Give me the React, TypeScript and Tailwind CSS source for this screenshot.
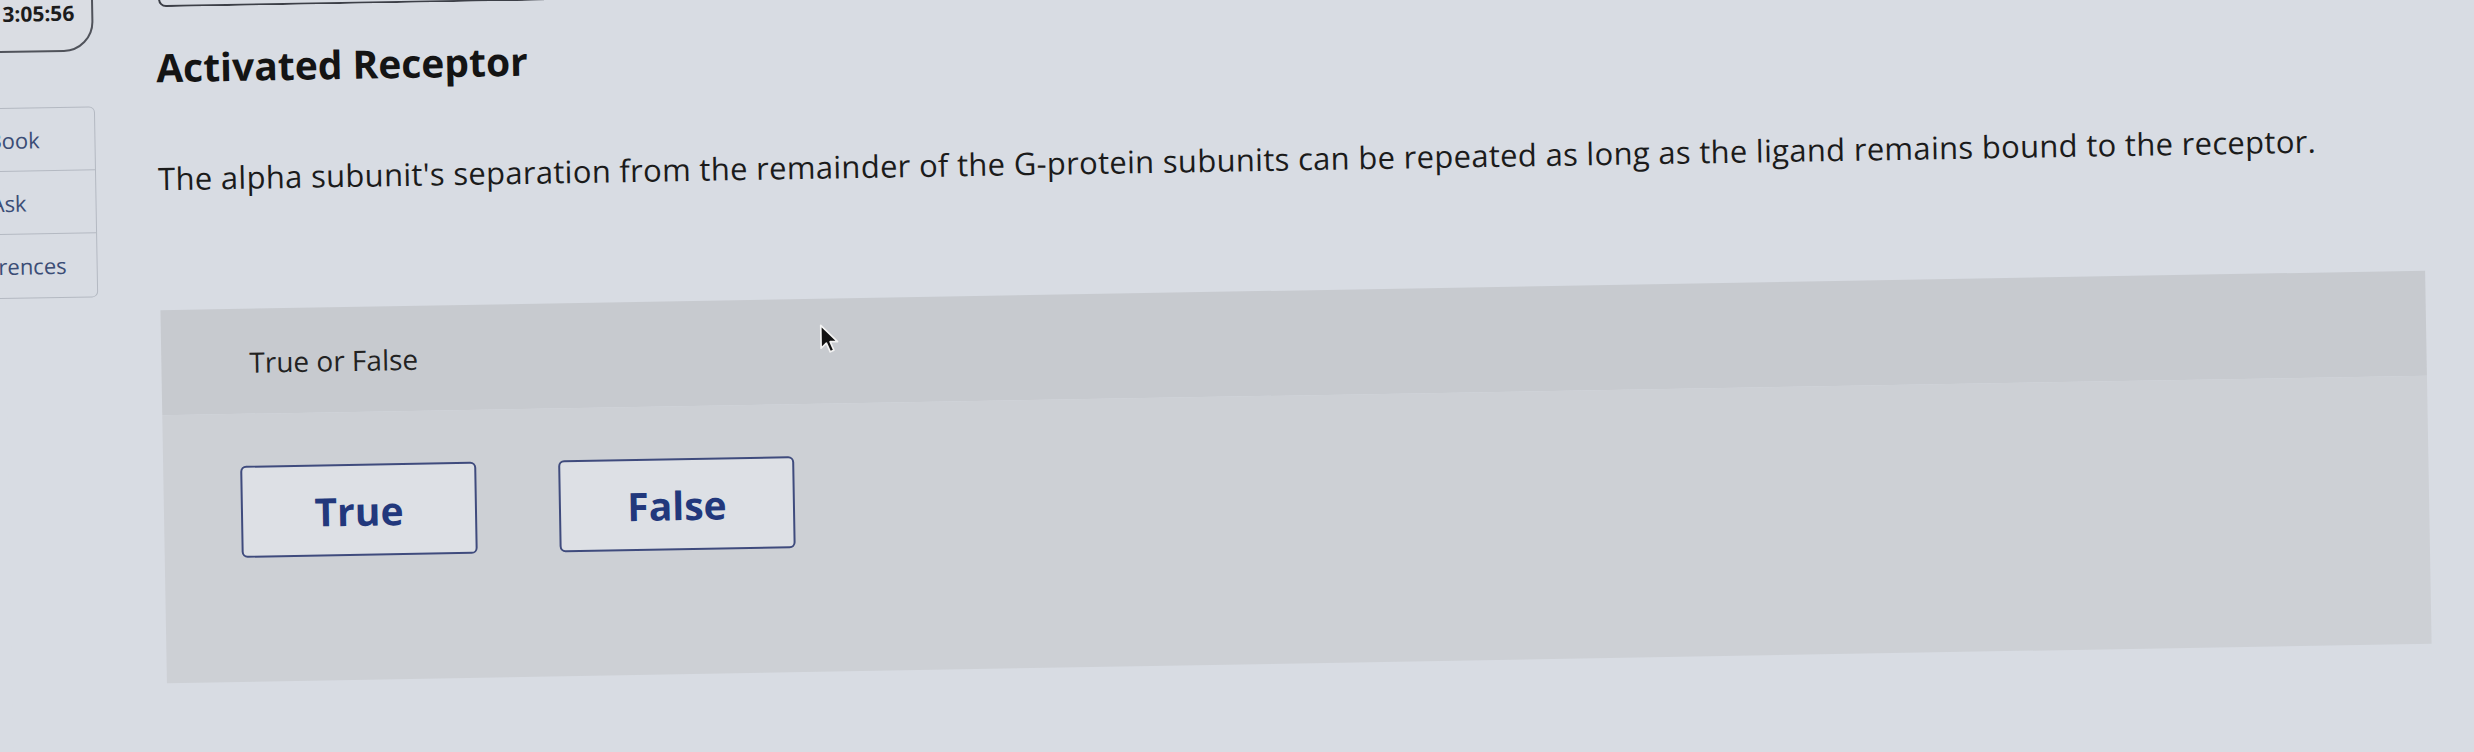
import React from "react";

function Cursor() {
  return (
    <svg
      className="absolute left-[658px] top-[25px]"
      width="22"
      height="32"
      viewBox="0 0 20 30"
    >
      <path
        d="M1.5 1.5 L1.5 23 L6.5 18.2 L10 26.5 L13.4 25 L10 17 L17 17 Z"
        fill="#111"
        stroke="#f2f2f2"
        strokeWidth="1.6"
        strokeLinejoin="round"
      />
    </svg>
  );
}

function AnswerButton({ label }: { label: string }) {
  return (
    <button className="w-[236px] h-[92px] rounded-[6px] border-2 border-[#3f4b7d] bg-[#dde0e5] flex items-center justify-center text-[39px] font-bold text-[#22387c] leading-none">
      {label}
    </button>
  );
}

export default function App() {
  const tabs = ["eBook", "Ask", "References"];
  return (
    <div className="w-[2474px] h-[752px] overflow-hidden bg-[#d8dce3] font-['Open_Sans',_'Lato',_sans-serif]">
      <div className="w-[2620px] h-[900px] origin-top-left -rotate-1 flex bg-[#d8dce3]">
        {/* left rail: timer and tool tabs */}
        <div className="w-[93px] shrink-0 flex flex-col">
          <div className="w-[133px] h-[73px] -ml-[40px] -mt-[20px] border-2 border-[#50535b] rounded-br-[30px] pl-[40px] pt-[22px] bg-[#dadde3]">
            <span className="text-[21px] font-bold leading-none text-[#1c1c1c]">
              3:05:56
            </span>
          </div>
          <div className="w-[176px] -ml-[83px] mt-[55px] border border-[#b4b9c2] rounded-r-[6px] flex flex-col">
            {tabs.map((t, i) => (
              <div
                key={t}
                className={`h-[63px] flex items-center justify-center text-[22px] text-[#3b4d76] ${
                  i < tabs.length - 1 ? "border-b border-[#b4b9c2]" : ""
                }`}
              >
                {t}
              </div>
            ))}
          </div>
        </div>

        {/* question area */}
        <div className="ml-[62px] w-[2265px] shrink-0 flex flex-col">
          <div className="w-[900px] h-[30px] -mt-[20px] ml-[3px] border-l-2 border-b-2 border-[#3c3f47] rounded-bl-[8px]" />
          <h1 className="mt-[35px] text-[39px] leading-[50px] font-bold text-[#141414]">
            Activated Receptor
          </h1>
          <p className="mt-[68px] text-[31px] leading-[37px] tracking-[0.3px] text-[#1b1b1b] whitespace-nowrap">
            The alpha subunit's separation from the remainder of the G-protein subunits can be repeated as long as the ligand remains bound to the receptor.
          </p>

          <div className="relative mt-[113px] w-[2265px] flex flex-col">
            <div className="h-[105px] bg-[#c7cacf] flex items-center pl-[88px] text-[28px] text-[#222]">
              True or False
            </div>
            <div className="h-[268px] bg-[#cdd0d5] pt-[52px] pl-[77px] flex items-start gap-[82px]">
              <AnswerButton label="True" />
              <AnswerButton label="False" />
            </div>
            <Cursor />
          </div>
        </div>
      </div>
    </div>
  );
}
